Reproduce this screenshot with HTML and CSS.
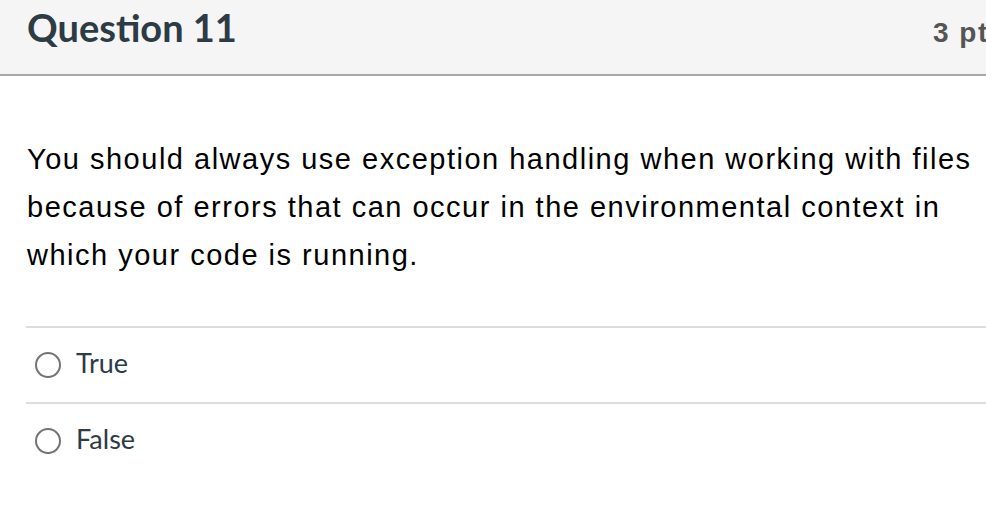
FILE: index.html
```html
<!DOCTYPE html>
<html>
<head>
<meta charset="utf-8">
<link rel="stylesheet" href="styles.css">
</head>
<body>
<div class="question">
  <div class="header">
    <h2 class="title">Question 11</h2>
    <span class="points">3 pts</span>
  </div>
  <div class="body">
    <p class="text">You should always use exception handling when working with files because of errors that can occur in the environmental context in which your code is running.</p>
    <div class="answers">
      <label class="answer"><span class="radio"></span><span class="label">True</span></label>
      <label class="answer"><span class="radio"></span><span class="label">False</span></label>
    </div>
  </div>
</div>
</body>
</html>
```
FILE: styles.css
```css
html, body {
  margin: 0;
  padding: 0;
  background: #ffffff;
  overflow: hidden;
}

.question {
  width: 1010px;
}

.header {
  height: 66px;
  padding: 8px 0 0 27px;
  background: #f5f5f5;
  border-bottom: 2px solid #a8a8a8;
  display: flex;
  align-items: baseline;
}

.title {
  margin: 0;
  font-family: Lato, sans-serif;
  font-weight: 700;
  font-size: 38px;
  line-height: 38px;
  color: #2d3b45;
}

.points {
  margin-left: auto;
  width: 77px;
  font-family: "Liberation Sans", Arial, sans-serif;
  font-weight: 700;
  font-size: 28px;
  letter-spacing: 1.5px;
  color: #555555;
  white-space: nowrap;
}

.body {
  padding: 59px 0 0 0;
}

.text {
  margin: 0;
  padding: 0 27px;
  width: 955px;
  font-family: "Liberation Sans", Arial, sans-serif;
  font-size: 29px;
  letter-spacing: 1.5px;
  line-height: 48px;
  color: #000000;
}

.answers {
  margin: 47px 0 0 26px;
}

.answer {
  display: flex;
  align-items: center;
  height: 74px;
  border-top: 2px solid #dddddd;
}

.radio {
  box-sizing: border-box;
  width: 26px;
  height: 26px;
  margin-left: 9px;
  border: 2px solid #737373;
  border-radius: 50%;
  flex: none;
}

.label {
  margin: 0 0 6px 15px;
  font-family: Lato, sans-serif;
  font-size: 27px;
  color: #2d3b45;
}
```
